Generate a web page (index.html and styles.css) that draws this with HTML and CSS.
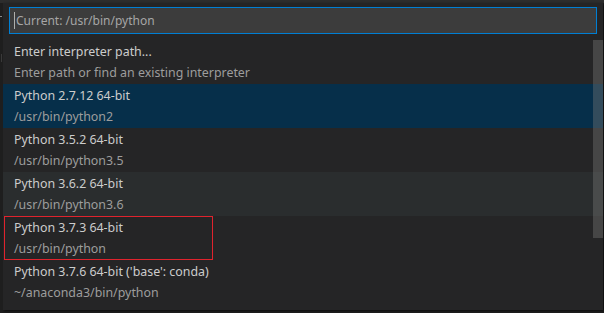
FILE: index.html
```html
<!DOCTYPE html>
<html>
<head>
<meta charset="utf-8">
<link rel="stylesheet" href="styles.css">
</head>
<body>
<div class="topstrip"></div>
<div class="stage">
  <div class="gutter">
    <span class="mark-dot"></span>
    <span class="mark-line"></span>
  </div>
  <div class="picker">
    <div class="input-wrap">
      <div class="input"><span class="caret"></span><span class="placeholder">Current: /usr/bin/python</span></div>
    </div>
    <div class="list">
      <div class="item">
        <div class="label">Enter interpreter path...</div>
        <div class="desc">Enter path or find an existing interpreter</div>
      </div>
      <div class="item selected">
        <div class="label">Python 2.7.12 64-bit</div>
        <div class="desc">/usr/bin/python2</div>
      </div>
      <div class="item">
        <div class="label">Python 3.5.2 64-bit</div>
        <div class="desc">/usr/bin/python3.5</div>
      </div>
      <div class="item hover">
        <div class="label">Python 3.6.2 64-bit</div>
        <div class="desc">/usr/bin/python3.6</div>
      </div>
      <div class="item">
        <div class="label">Python 3.7.3 64-bit</div>
        <div class="desc">/usr/bin/python</div>
        <div class="redbox"></div>
      </div>
      <div class="item">
        <div class="label">Python 3.7.6 64-bit ('base': conda)</div>
        <div class="desc">~/anaconda3/bin/python</div>
      </div>
      <div class="scrollbar"></div>
    </div>
  </div>
</div>
</body>
</html>
```
FILE: styles.css
```css
* { box-sizing: border-box; }
html, body { margin: 0; padding: 0; }
body {
  width: 604px;
  height: 313px;
  background: #1e1e1e;
  font-family: "Noto Sans", "Open Sans", sans-serif;
  font-size: 12.4px;
  overflow: hidden;
}
.topstrip {
  height: 3px;
  background: #2d2d2d;
}
.stage {
  display: flex;
  height: 307px;
}
.gutter {
  width: 3px;
  position: relative;
  background: #1e1e1e;
}
.mark-dot {
  position: absolute;
  left: 0;
  top: 13px;
  width: 2px;
  height: 1px;
  background: #8a8a8a;
}
.mark-line {
  position: absolute;
  left: 1px;
  top: 51px;
  width: 1px;
  height: 8px;
  background: #3a3a3a;
}
.picker {
  width: 600px;
  background: #252526;
  box-shadow: 1px 1px 2px #0d0d0d;
  display: flex;
  flex-direction: column;
}
.input-wrap {
  padding: 4px 6px 0 6px;
}
.input {
  height: 27px;
  border: 1px solid #007fd4;
  background: #3c3c3c;
  display: flex;
  align-items: center;
  padding-left: 4px;
}
.caret {
  width: 1px;
  height: 17px;
  background: #aeafad;
  margin-right: 1px;
}
.placeholder {
  color: #a6a6a6;
  font-size: 12px;
}
.list {
  margin-top: 6px;
  position: relative;
}
.item {
  height: 44px;
  padding-left: 11px;
  padding-top: 1px;
  position: relative;
  display: flex;
  flex-direction: column;
}
.item.selected { background: #062f4a; }
.item.hover { background: #2a2d2e; }
.label, .desc {
  height: 21px;
  line-height: 21px;
  white-space: nowrap;
}
.label { color: #cccccc; }
.desc { color: #9d9d9d; }
.redbox {
  position: absolute;
  left: 1px;
  top: 0;
  width: 209px;
  height: 44px;
  border: 1px solid #e0232d;
}
.scrollbar {
  position: absolute;
  right: 0;
  top: 0;
  width: 10px;
  height: 198px;
  background: rgba(121, 121, 121, 0.4);
}
```
